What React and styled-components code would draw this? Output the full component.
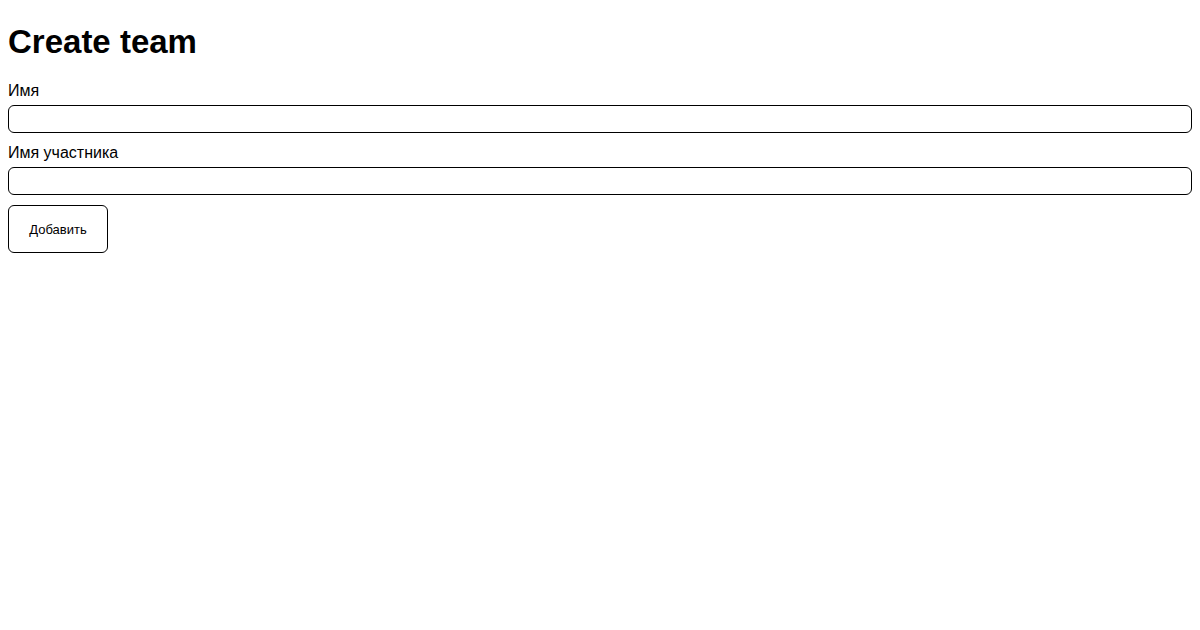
import React from "react";
import styled, { createGlobalStyle } from "styled-components";

const Global = createGlobalStyle`
  html, body { margin: 0; padding: 0; background: #fff; }
  body { font-family: "Liberation Sans", Arial, sans-serif; color: #000; }
`;

const Page = styled.main`
  padding: 8px;
`;

const Title = styled.h1`
  font-size: 33px;
  font-weight: 700;
  line-height: 37px;
  margin: 15px 0 21px;
`;

const Form = styled.form`
  display: flex;
  flex-direction: column;
  align-items: stretch;
`;

const Label = styled.label`
  font-size: 16px;
  line-height: 18px;
  padding-top: 1px;
  margin-bottom: 5px;
`;

const Input = styled.input`
  box-sizing: border-box;
  height: 28px;
  width: 100%;
  border: 1px solid #000;
  border-radius: 6px;
  padding: 0 6px;
  margin: 0 0 10px;
  font-family: inherit;
  font-size: 14px;
  background: #fff;
  outline: none;
`;

const Button = styled.button`
  align-self: flex-start;
  box-sizing: border-box;
  width: 100px;
  height: 48px;
  border: 1px solid #000;
  border-radius: 6px;
  background: #fff;
  color: #000;
  font-family: "Liberation Sans", Arial, sans-serif;
  font-size: 13px;
  cursor: pointer;
`;

export default function App() {
  return (
    <>
      <Global />
      <Page>
        <Title>Create team</Title>
        <Form onSubmit={(e) => e.preventDefault()}>
          <Label htmlFor="name">Имя</Label>
          <Input id="name" type="text" />
          <Label htmlFor="member">Имя участника</Label>
          <Input id="member" type="text" />
          <Button type="button">Добавить</Button>
        </Form>
      </Page>
    </>
  );
}
